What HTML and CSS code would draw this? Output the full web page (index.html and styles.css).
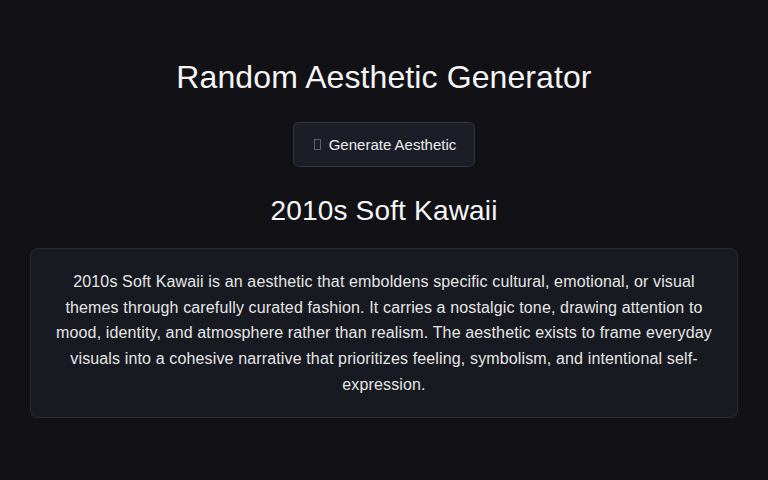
FILE: index.html
```html
<!DOCTYPE html>
<html lang="en">
<head>
<meta charset="utf-8">
<title>Random Aesthetic Generator</title>
<link rel="stylesheet" href="styles.css">
</head>
<body>
<main class="app">
  <h1 class="title">Random Aesthetic Generator</h1>
  <button class="generate" type="button"><span class="tofu"></span>Generate Aesthetic</button>
  <h2 class="name">2010s Soft Kawaii</h2>
  <section class="card">
    <p class="desc">2010s Soft Kawaii is an aesthetic that emboldens specific cultural, emotional, or visual themes through carefully curated fashion. It carries a nostalgic tone, drawing attention to mood, identity, and atmosphere rather than realism. The aesthetic exists to frame everyday visuals into a cohesive narrative that prioritizes feeling, symbolism, and intentional self-expression.</p>
  </section>
</main>
</body>
</html>
```
FILE: styles.css
```css
html, body {
  margin: 0;
  padding: 0;
  background: #111116;
  color: #f2f2f2;
  font-family: "Liberation Sans", Arial, sans-serif;
}
.app {
  display: flex;
  flex-direction: column;
  align-items: center;
  padding: 59px 30px 40px;
}
.title {
  margin: 0;
  font-size: 32px;
  font-weight: 400;
  line-height: 1.15;
  letter-spacing: 0.1px;
  color: #f5f5f5;
}
.generate {
  margin-top: 26px;
  display: flex;
  align-items: center;
  padding: 13px 18px 13px 20px;
  background: #1c1e27;
  border: 1px solid #34363f;
  border-radius: 6px;
  color: #ececec;
  font-family: "Liberation Sans", Arial, sans-serif;
  font-size: 15px;
  line-height: 1.15;
}
.tofu {
  display: inline-block;
  width: 5px;
  height: 9px;
  border: 1px solid #5e6068;
  margin-right: 8px;
}
.name {
  margin: 28px 0 0;
  font-size: 28px;
  font-weight: 400;
  line-height: 1.15;
  letter-spacing: 0.18px;
  color: #f7f7f7;
}
.card {
  margin-top: 21px;
  align-self: stretch;
  background: #181a22;
  border: 1px solid #2a2c35;
  border-radius: 8px;
  padding: 20px 24px 20px;
}
.desc {
  margin: 0;
  text-align: center;
  font-size: 16px;
  line-height: 1.6;
  letter-spacing: 0.14px;
  color: #e6e6e6;
}
```
